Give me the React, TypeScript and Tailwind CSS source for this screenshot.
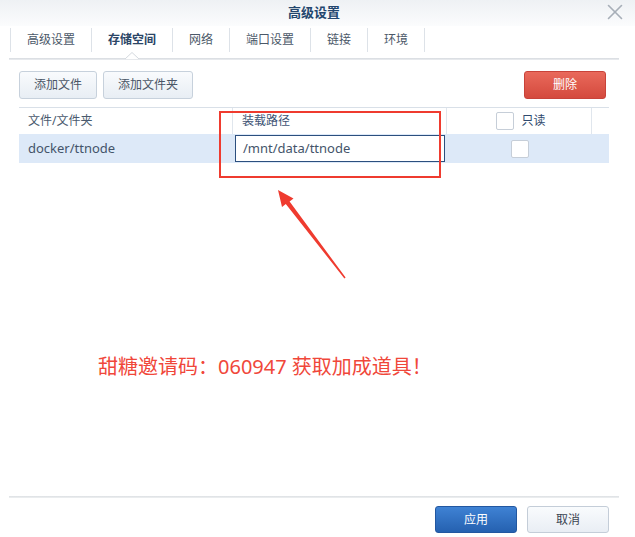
import { X } from "lucide-react";

const tabs = ["高级设置", "存储空间", "网络", "端口设置", "链接", "环境"];

function Checkbox() {
  return <span className="block h-[18px] w-[18px] rounded-[2px] border border-[#c6ced8] bg-white" />;
}

function GrayButton({ children, w }: { children: string; w: string }) {
  return (
    <button
      className={`${w} flex h-[28px] items-center justify-center rounded-[3px] border border-[#c7d1dc] bg-gradient-to-b from-[#f9fbfd] to-[#e8eef4] text-[12px] text-[#4a5566]`}
    >
      {children}
    </button>
  );
}

export default function App() {
  return (
    <div
      className="relative h-[537px] w-[635px] overflow-hidden bg-white text-[12px] text-[#4a5a6e]"
      style={{ fontFamily: '"Noto Sans", "Noto Sans CJK SC", sans-serif' }}
    >
      {/* title bar */}
      <div className="bg-gradient-to-b from-[#eef1f4] to-[#fbfcfd]">
        <div className="ml-[9px] grid h-[26px] w-[610px] grid-cols-[1fr_auto_1fr] items-center">
          <span />
          <span className="text-[13px] font-bold text-[#23466e]">高级设置</span>
          <span className="flex justify-end">
            <X size={26} strokeWidth={1.5} className="mr-[-9px] mt-[-3px] text-[#a7afb8]" />
          </span>
        </div>
      </div>

      <div className="ml-[9px] w-[610px]">
        {/* tabs */}
        <div className="flex pl-[1px] pt-[2px]">
          {tabs.map((t, i) => (
            <div
              key={t}
              className={`flex h-[24px] items-center border-r border-[#dde2e8] px-4 ${i === 0 ? "border-l" : ""} ${
                i === 1 ? "font-bold text-[#2b4566]" : "text-[#4b5868]"
              }`}
            >
              {t}
            </div>
          ))}
        </div>
        <div className="h-[6px]" />
        <div className="relative h-[2px] bg-gradient-to-b from-[#d6dadf] to-[#eceef1]">
          <svg className="absolute bottom-[1px] left-[116px]" width="14" height="7" viewBox="0 0 14 7">
            <path d="M0 7 L7 0.5 L14 7" fill="white" stroke="#d3d8de" strokeWidth="1" />
          </svg>
        </div>

        <div className="px-[10px]">
          {/* toolbar */}
          <div className="mt-[11px] flex gap-[6px]">
            <GrayButton w="w-[78px]">添加文件</GrayButton>
            <GrayButton w="w-[90px]">添加文件夹</GrayButton>
            <button className="ml-auto mr-[3px] flex h-[28px] w-[82px] items-center justify-center rounded-[3px] border border-[#c8433a] bg-gradient-to-b from-[#e9695b] to-[#d4493d] text-[12px] text-white">
              删除
            </button>
          </div>

          {/* table */}
          <div className="mt-[8px] border-t border-[#d9e0e8]">
            <div className="flex h-[26px] items-center">
              <div className="flex h-full w-[214px] items-center border-r border-[#e0e6ed] pl-[9px]">文件/文件夹</div>
              <div className="flex h-full w-[214px] items-center border-r border-[#e0e6ed] pl-[9px] text-[#3f5576]">装载路径</div>
              <div className="flex h-full w-[145px] items-center justify-center gap-[7px] border-r border-[#e0e6ed] pl-[4px] text-[#2f4a6e]">
                <Checkbox />
                <span>只读</span>
              </div>
            </div>
            <div className="flex h-[29px] items-center bg-[#dde9f8] text-[13px]">
              <div className="w-[214px] pl-[9px] text-[#44546a]">docker/ttnode</div>
              <div className="w-[214px] pl-[2px]">
                <div className="flex h-[27px] w-[210px] items-center border border-[#2c4f7e] bg-white pl-[7px] text-[#44546a]">
                  /mnt/data/ttnode
                </div>
              </div>
              <div className="flex w-[145px] justify-center">
                <Checkbox />
              </div>
            </div>
          </div>

          {/* annotation text */}
          <div className="h-[333px] pl-[79px] pt-[192px]">
            <p className="text-[20px] leading-[24px] text-[#f0473a]">甜糖邀请码：060947 获取加成道具！</p>
          </div>
        </div>

        {/* footer */}
        <div className="h-[2px] bg-gradient-to-b from-[#dcdfe3] to-[#eef0f2]" />
        <div className="flex justify-end gap-[10px] pr-[10px] pt-[8px]">
          <button className="flex h-[27px] w-[82px] items-center justify-center rounded-[3px] border border-[#2257a0] bg-gradient-to-b from-[#3f82d4] to-[#2561b0] text-[12px] text-white">
            应用
          </button>
          <button className="flex h-[27px] w-[82px] items-center justify-center rounded-[3px] border border-[#c4cdd8] bg-gradient-to-b from-[#f9fbfd] to-[#e9eef4] text-[12px] text-[#3a4452]">
            取消
          </button>
        </div>
      </div>

      {/* red highlight + arrow overlay */}
      <div className="absolute left-[219px] top-[111px] h-[67px] w-[222px] border-2 border-[#ef3b2f]" />
      <svg className="absolute left-0 top-0" width="635" height="537" viewBox="0 0 635 537">
        <polygon
          points="278,190 293.5,198.5 289.6,201.4 345.6,277.6 344.4,278.4 285.8,204.1 282,207"
          fill="#ef3b2f"
        />
      </svg>
    </div>
  );
}
